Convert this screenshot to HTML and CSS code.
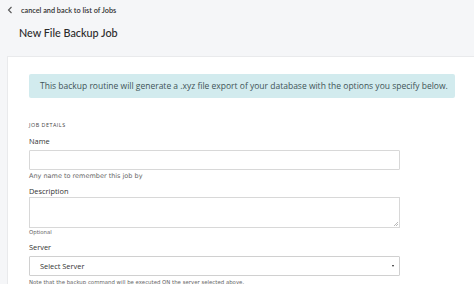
FILE: index.html
```html
<!DOCTYPE html>
<html>
<head>
<meta charset="utf-8">
<link rel="stylesheet" href="styles.css">
</head>
<body>
<div class="page">
  <div class="back">
    <svg class="chev" width="6" height="8" viewBox="0 0 6 8"><path d="M4.5 1 L1.5 4 L4.5 7" fill="none" stroke="#555" stroke-width="1.1"/></svg>
    <span class="back-text">cancel and back to list of Jobs</span>
  </div>
  <h1 class="title">New File Backup Job</h1>
  <div class="card">
    <div class="alert">This backup routine will generate a .xyz file export of your database with the options you specify below.</div>
    <div class="section">JOB DETAILS</div>
    <div class="form">
      <label class="label label-first">Name</label>
      <div class="input"></div>
      <div class="help help-name">Any name to remember this job by</div>
      <label class="label label-desc">Description</label>
      <div class="textarea"><svg class="grip" width="5" height="5" viewBox="0 0 5 5"><path d="M1 5 L5 1 M3 5 L5 3" stroke="#aaa" stroke-width="0.8"/></svg></div>
      <div class="help help-tight">Optional</div>
      <label class="label label-server">Server</label>
      <div class="select"><span>Select Server</span><span class="arrow"></span></div>
      <div class="help help-note">Note that the backup command will be executed ON the server selected above.</div>
    </div>
  </div>
</div>
</body>
</html>
```
FILE: styles.css
```css
html, body {
  margin: 0;
  padding: 0;
  background: #f5f6f8;
  overflow: hidden;
}
.page {
  font-family: "Open Sans", "Lato", sans-serif;
  color: #333;
}
.back {
  display: flex;
  align-items: center;
  height: 20px;
  padding-left: 7px;
}
.chev {
  margin-right: 8px;
}
.back-text {
  font-family: "Lato", sans-serif;
  font-size: 7.3px;
  color: #333;
  font-weight: 600;
}
.title {
  margin: 0;
  padding: 6px 0 0 19px;
  height: 24px;
  font-family: "Lato", sans-serif;
  font-size: 10.8px;
  font-weight: 500;
  color: #2a2a2a;
  line-height: 14px;
}
.card {
  margin: 6px -10px 0 7px;
  background: #fff;
  border-top: 1px solid #e9eaec;
  border-left: 1px solid #e9eaec;
  padding: 17px 0 0 21px;
  height: 300px;
}
.alert {
  width: 415px;
  height: 24px;
  line-height: 24px;
  padding-left: 11px;
  background: #d2ebee;
  border-radius: 2px;
  color: #3f5458;
  font-size: 8.5px;
  white-space: nowrap;
}
.section {
  margin-top: 22px;
  font-size: 5.4px;
  letter-spacing: 0.5px;
  color: #444;
  height: 10px;
  line-height: 10px;
}
.form {
  width: 371px;
  display: flex;
  flex-direction: column;
}
.label {
  font-size: 7.4px;
  color: #333;
  line-height: 10px;
  height: 10px;
}
.label-first {
  margin-top: 6px;
  margin-bottom: 4px;
}
.label-desc {
  margin-top: 6px;
  margin-bottom: 1px;
}
.label-server {
  margin-top: 6px;
  margin-bottom: 4px;
}
.input {
  height: 18px;
  border: 1px solid #d8d8d8;
  border-radius: 1px;
}
.textarea {
  height: 29px;
  border: 1px solid #d8d8d8;
  position: relative;
}
.grip {
  position: absolute;
  right: 1px;
  bottom: 1px;
}
.help {
  font-family: "DejaVu Sans", sans-serif;
  font-size: 5.4px;
  color: #666;
  margin-top: 3px;
  line-height: 7px;
  height: 7px;
  white-space: nowrap;
}
.help-name {
  font-size: 6.5px;
}
.help-tight {
  margin-top: 1px;
}
.help-note {
  margin-top: 3px;
}
.select {
  height: 18px;
  border: 1px solid #d0d0d0;
  border-radius: 1px;
  display: flex;
  align-items: center;
  justify-content: space-between;
  padding: 0 5px 0 10px;
  font-size: 7.4px;
  color: #333;
}
.arrow {
  width: 0;
  height: 0;
  border-left: 1.6px solid transparent;
  border-right: 1.6px solid transparent;
  border-top: 2.5px solid #222;
}
```
